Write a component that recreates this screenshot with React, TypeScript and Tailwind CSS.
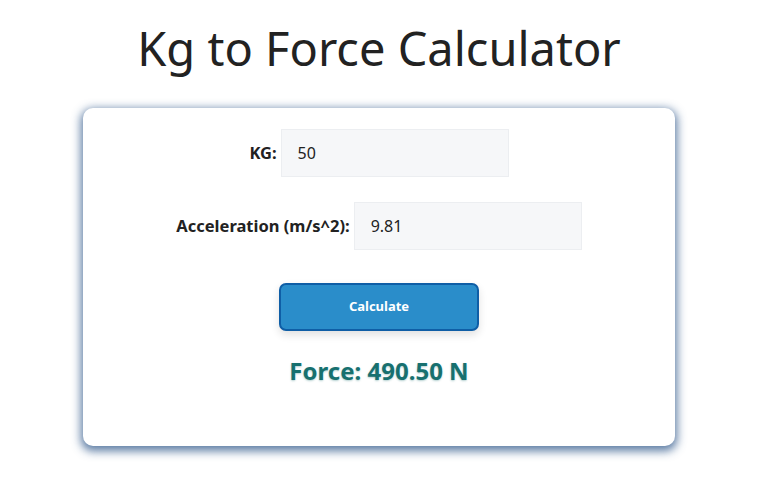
import React, { useState } from 'react';

const App: React.FC = () => {
  const [kg, setKg] = useState('50');
  const [acc, setAcc] = useState('9.81');
  const [force, setForce] = useState<number>(490.5);

  const calculate = () => {
    setForce((parseFloat(kg) || 0) * (parseFloat(acc) || 0));
  };

  return (
    <div className="min-h-[482px] w-full bg-white flex flex-col items-center font-['Noto_Sans',sans-serif] text-[#222]">
      <h1 className="mt-[16px] text-[47px] font-normal leading-[64px]">Kg to Force Calculator</h1>

      <div className="mt-[28px] w-[592px] h-[338px] rounded-[10px] bg-white shadow-[0_3px_10px_2px_rgba(50,90,140,0.8)] flex flex-col items-center pt-[21px]">
        {/* KG row */}
        <div className="flex items-center gap-[4px]">
          <label className="text-[16.5px] font-bold">KG:</label>
          <input
            value={kg}
            onChange={(e) => setKg(e.target.value)}
            className="w-[228px] h-[48px] bg-[#f6f7f9] border border-[#eceef1] px-[16px] text-[16px] outline-none"
          />
        </div>

        {/* Acceleration row */}
        <div className="mt-[25px] flex items-center gap-[4px]">
          <label className="text-[16.5px] font-bold">Acceleration (m/s^2):</label>
          <input
            value={acc}
            onChange={(e) => setAcc(e.target.value)}
            className="w-[228px] h-[48px] bg-[#f6f7f9] border border-[#eceef1] px-[16px] text-[16px] outline-none"
          />
        </div>

        <button
          onClick={calculate}
          className="mt-[33px] w-[200px] h-[48px] rounded-[7px] bg-[#2a8dca] border-2 border-[#0f5ea6] text-white text-[13px] font-bold shadow-[0_4px_8px_rgba(0,0,0,0.12)]"
        >
          Calculate
        </button>

        <div className="mt-[22px] text-[24px] font-bold text-[#17706f] [text-shadow:0_1px_2px_rgba(40,120,120,0.35)]">
          Force: {force.toFixed(2)} N
        </div>
      </div>
    </div>
  );
};

export default App;
